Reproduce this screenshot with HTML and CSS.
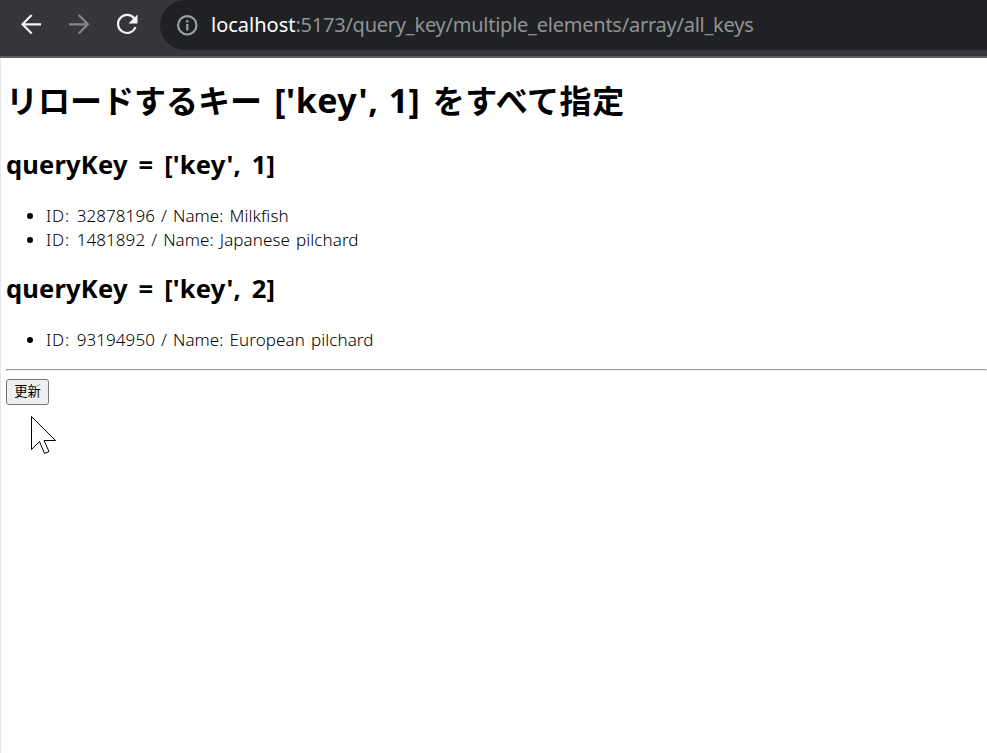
FILE: index.html
```
<!DOCTYPE html>
<html lang="ja">
  <head>
    <meta charset="utf-8" />
    <title>all_keys</title>
    <link rel="stylesheet" href="styles.css">
  </head>
  <body>
    <div class="toolbar">
      <svg class="icon back" width="24" height="24" viewBox="0 0 24 24"><path d="M22 12.300H4M12.700 3l-9.200 9.300 9.200 9.200" /></svg>
      <svg class="icon forward" width="24" height="24" viewBox="0 0 24 24"><path d="M2 12.300h18M11.700 3l9.200 9.300-9.200 9.200" /></svg>
      <svg class="icon reload" width="24" height="24" viewBox="0 0 24 24">
        <path d="M19.200 6.500A9 9 0 1 0 20.500 15" />
        <path class="fill" d="M22.500 2.500v9h-9z" />
      </svg>
      <div class="address">
        <svg class="icon info" width="22" height="22" viewBox="0 0 22 22">
          <circle cx="11.300" cy="11.300" r="9.200" />
          <path d="M11.300 10v6.500M11.300 6v2.400" />
        </svg>
        <span class="url"><span class="host">localhost</span>:5173/query_key/multiple_elements/array/all_keys</span>
      </div>
    </div>

    <div class="page">
      <h1>リロードするキー <span class="latin">['key', 1]</span> <span class="tail">をすべて指定</span></h1>
      <h2>queryKey = ['key', 1]</h2>
      <ul>
        <li><span class="label">ID: </span>32878196 / Name: Milkfish</li>
        <li><span class="label">ID: </span>1481892 / Name: Japanese pilchard</li>
      </ul>
      <h2>queryKey = ['key', 2]</h2>
      <ul>
        <li><span class="label">ID: </span>93194950 / Name: European pilchard</li>
      </ul>
      <hr>
      <button>更新</button>
    </div>

    <svg class="cursor" width="27" height="40" viewBox="0 0 27 40">
      <path d="M1.500 1.500v33l8-8 5 12 4.500-2-5-11h11.500z" />
    </svg>
  </body>
</html>
```

FILE: styles.css
```
html {
  height: 100%;
}
body {
  margin: 0;
  height: 100%;
  overflow: hidden;
  color: #000;
  background-color: #fff;
  font-family: 'Noto Sans', 'Noto Sans CJK JP', sans-serif;
}
.toolbar {
  display: flex;
  box-sizing: border-box;
  height: 58px;
  padding-left: 19px;
  background-color: #35363a;
  border-bottom: 2px solid #5c5c61;
}
.icon {
  flex: none;
  margin-top: 12px;
  margin-right: 24px;
  fill: none;
  stroke: #f1f3f4;
  stroke-width: 2.2;
}
.forward {
  stroke: #85868a;
}
.reload .fill {
  fill: #f1f3f4;
  stroke: none;
}
.address {
  display: flex;
  flex: 1;
  height: 50px;
  margin-left: -3px;
  padding-left: 16px;
  background-color: #202124;
  border-radius: 25px 0 0 25px;
}
.info {
  margin-top: 14px;
  margin-right: 13px;
  stroke: #9aa0a6;
}
.url {
  color: #919395;
  font-size: 20px;
  line-height: 50px;
  letter-spacing: -0.24px;
  white-space: nowrap;
}
.host {
  color: #fff;
  letter-spacing: 0;
}
.page {
  box-sizing: border-box;
  height: 695px;
  padding-left: 5px;
  border-left: 1px solid #e8e8e8;
  overflow: hidden;
}
h1 {
  margin: 19px 0 0;
  font-size: 32px;
  line-height: 48px;
  word-spacing: 4px;
}
.latin {
  font-size: 34px;
  line-height: 1;
  letter-spacing: 0.5px;
  word-spacing: 1px;
}
.tail {
  letter-spacing: 0.6px;
}
h2 {
  margin: 21px 0 0;
  font-size: 25.5px;
  font-weight: 700;
  line-height: 36px;
  letter-spacing: 0.2px;
  word-spacing: 4px;
}
ul {
  margin: 22px 0 0;
  padding-left: 40px;
  font-size: 17px;
  font-weight: 300;
  line-height: 24px;
  letter-spacing: 0.08px;
  word-spacing: 1.5px;
}
ul + h2 {
  margin-top: 18px;
}
.label {
  letter-spacing: 0.8px;
}
hr {
  margin: 17px 0 8px;
}
button {
  display: block;
  width: 43px;
  height: 26px;
  padding: 0 0 2px;
  font-family: 'Noto Sans CJK JP', sans-serif;
  font-size: 13.333px;
  line-height: 20px;
  color: #000;
  background-color: #efefef;
  border: 1px solid #767676;
  border-radius: 3px;
}
.cursor {
  position: absolute;
  left: 30px;
  top: 415px;
  fill: #fff;
  stroke: #000;
}
```
